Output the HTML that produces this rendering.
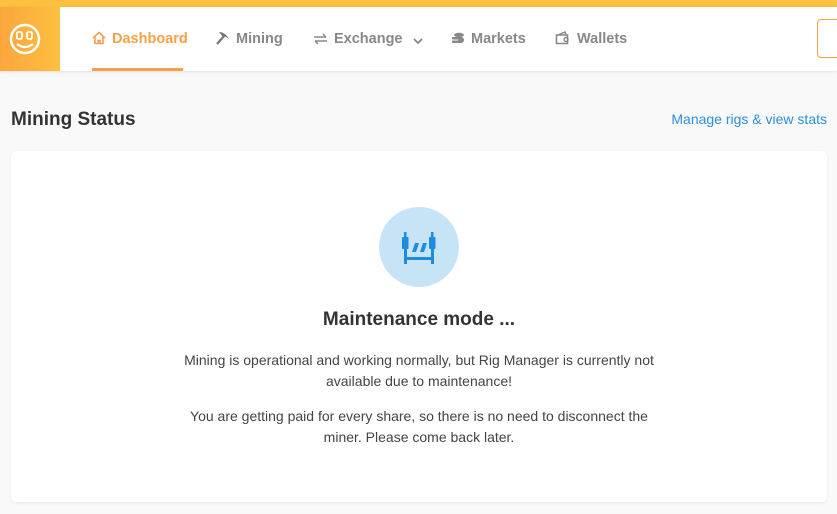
<!DOCTYPE html>
<html><head><meta charset="utf-8"><style>
*{margin:0;padding:0;box-sizing:border-box}
body{width:837px;height:514px;overflow:hidden;background:#f9f9f9;font-family:"Liberation Sans","DejaVu Sans",sans-serif;color:#333}
.top{position:absolute;left:0;top:0;width:837px;height:7px;background:#fbc13f}
.nav{position:absolute;left:0;top:7px;width:837px;height:64px;background:#fff;box-shadow:0 1px 3px rgba(0,0,0,.1)}
.logo{position:absolute;left:0;top:0;width:60px;height:64px;background:linear-gradient(90deg,#fba63c,#fcc040)}
.item{position:absolute;top:0;height:64px;line-height:64px;font-size:14.5px;color:#888;font-weight:bold}
.item svg{vertical-align:-2px;margin-right:6px}
.act{color:#f7a04a}
.ul{position:absolute;left:92px;top:61px;width:91px;height:3px;background:#f7a04a}
.btn{position:absolute;left:817px;top:12px;width:40px;height:39px;border:1px solid #f7a04a;border-radius:4px}
h1{position:absolute;left:11px;top:109px;font-size:19px;font-weight:bold;color:#333}
.link{position:absolute;right:10px;top:111px;font-size:14px;color:#2b8fdc}
.card{position:absolute;left:11px;top:151px;width:816px;height:351px;background:#fff;border-radius:5px;box-shadow:0 1px 3px rgba(0,0,0,.06)}
.circ{position:absolute;left:368px;top:56px;width:80px;height:80px;border-radius:50%;background:#c7e4f7}
h2{position:absolute;left:0;width:816px;top:158px;text-align:center;font-size:19px;font-weight:bold;color:#333}
p{position:absolute;left:0;width:816px;text-align:center;font-size:14px;line-height:21px;color:#444}
</style></head><body>
<div class="top"></div>
<div class="nav">
 <div class="logo"><svg width="60" height="64" viewBox="0 0 60 64"><circle cx="25" cy="32" r="14" fill="none" stroke="#fff" stroke-width="2.5"/><rect x="17" y="25" width="5" height="7" rx="1.5" fill="none" stroke="#fff" stroke-width="1.8"/><rect x="27" y="25" width="5" height="7" rx="1.5" fill="none" stroke="#fff" stroke-width="1.8"/><path d="M17 37q8 6 16 0" fill="none" stroke="#fff" stroke-width="2.3"/></svg></div>
 <div class="item act" style="left:92px"><svg width="14" height="14" viewBox="0 0 14 14"><path d="M1 7L7 1.5 13 7M3 6v6.5h8V6M6 12.5v-3h2v3" fill="none" stroke="#f7a04a" stroke-width="1.6"/></svg>Dashboard</div>
 <div class="ul"></div>
 <div class="item" style="left:215px"><svg width="15" height="15" viewBox="0 0 15 15"><path d="M2 14L10 5" stroke="#777" stroke-width="2.2"/><path d="M4 2q6 0 10 7 -3-3-7-3z" fill="#777"/></svg>Mining</div>
 <div class="item" style="left:313px"><svg width="15" height="12" viewBox="0 0 15 12"><path d="M1 4h12M10 1l3 3M14 8H2M5 11L2 8" fill="none" stroke="#888" stroke-width="1.5"/></svg>Exchange<svg width="10" height="8" viewBox="0 0 10 8" style="margin-left:10px"><path d="M1 2l4 4 4-4" fill="none" stroke="#888" stroke-width="1.8"/></svg></div>
 <div class="item" style="left:451px"><svg width="14" height="13" viewBox="0 0 14 13"><ellipse cx="8" cy="3" rx="5" ry="2.2" fill="#888"/><rect x="1" y="5" width="10" height="2.5" rx="1" fill="#888"/><rect x="1" y="8.5" width="10" height="2.5" rx="1" fill="#888"/><circle cx="10" cy="8" r="3" fill="#888"/></svg>Markets</div>
 <div class="item" style="left:555px"><svg width="16" height="14" viewBox="0 0 16 14"><path d="M1.5 4v8.5h11V4z" fill="none" stroke="#888" stroke-width="1.6"/><path d="M3 4l7-3 1 3" fill="none" stroke="#888" stroke-width="1.4"/><circle cx="11" cy="8.5" r="2" fill="none" stroke="#888" stroke-width="1.4"/></svg>Wallets</div>
 <div class="btn"></div>
</div>
<h1>Mining Status</h1>
<div class="link">Manage rigs &amp; view stats</div>
<div class="card">
 <div class="circ"><svg width="80" height="80" viewBox="0 0 80 80"><g fill="#1a8ddf">
  <rect x="25" y="25" width="2.5" height="6"/><rect x="23" y="30" width="6.5" height="12" rx="1"/><rect x="25" y="41" width="3" height="16"/>
  <rect x="52" y="25" width="2.5" height="6"/><rect x="50" y="30" width="6.5" height="12" rx="1"/><rect x="52" y="41" width="3" height="16"/>
  <rect x="26" y="50" width="28" height="3"/>
  <path d="M33 45l3-9h4l-3 9zM41 45l3-9h4l-3 9z"/></g></svg></div>
 <h2>Maintenance mode ...</h2>
 <p style="top:199px">Mining is operational and working normally, but Rig Manager is currently not<br>available due to maintenance!</p>
 <p style="top:255px">You are getting paid for every share, so there is no need to disconnect the<br>miner. Please come back later.</p>
</div>
</body></html>
